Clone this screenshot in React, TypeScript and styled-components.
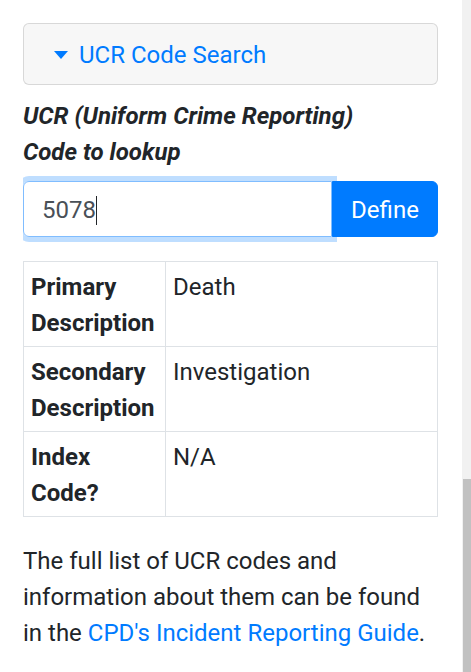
import styled, { createGlobalStyle } from 'styled-components';

const GlobalStyle = createGlobalStyle`
  html, body {
    margin: 0;
    padding: 0;
    overflow: hidden;
    background: #fff;
  }
  body {
    font-family: Roboto, "Liberation Sans", sans-serif;
    font-size: 24px;
    line-height: 36px;
    color: #212529;
  }
`;

const Page = styled.div`
  display: flex;
  height: 100vh;
`;

const Main = styled.main`
  flex: 1;
  padding: 24px 24px 0 23px;
  min-width: 0;
`;

const ScrollTrack = styled.div`
  width: 9px;
  background: #f1f1f1;
  display: flex;
  flex-direction: column;
`;

const ScrollThumb = styled.div`
  margin-top: auto;
  margin-left: 1px;
  height: 193px;
  background: #c1c1c1;
`;

const CardHeader = styled.button`
  display: flex;
  align-items: center;
  gap: 11px;
  width: 100%;
  box-sizing: border-box;
  height: 62px;
  margin-top: -1px;
  padding: 2px 30px 0;
  background: #f7f7f7;
  border: 1px solid rgba(0, 0, 0, 0.125);
  border-radius: 6px;
  font: inherit;
  color: #007bff;
  text-align: left;
  cursor: pointer;
`;

const Label = styled.label`
  display: block;
  max-width: 390px;
  margin: 13px 0 11px;
  font-weight: 700;
  font-style: italic;
`;

const InputGroup = styled.div`
  display: flex;
  height: 56px;
`;

const Field = styled.div`
  flex: 1;
  display: flex;
  align-items: center;
  padding: 2px 18px 0;
  border: 1px solid #80bdff;
  border-radius: 6px 0 0 6px;
  color: #495057;
  box-shadow: 0 0 0 5px rgba(0, 123, 255, 0.25);
  clip-path: inset(-5px -5px -5px 0);
  position: relative;
  z-index: 1;
`;

const Caret = styled.span`
  display: inline-block;
  width: 1px;
  height: 29px;
  background: #212529;
  margin-left: 0;
`;

const DefineButton = styled.button`
  width: 106px;
  border: 1px solid #007bff;
  border-radius: 0 6px 6px 0;
  background: #007bff;
  color: #fff;
  font: inherit;
  padding: 2px 0 0;
  position: relative;
  z-index: 2;
  cursor: pointer;
`;

const Table = styled.table`
  width: 100%;
  margin: 24px 0;
  border-collapse: collapse;
  table-layout: fixed;
`;

const Cell = styled.td<{ $head?: boolean }>`
  border: 1px solid #dee2e6;
  padding: 7px 7px 5px;
  vertical-align: top;
  text-align: left;
  font-weight: ${p => (p.$head ? 700 : 400)};
`;

const Note = styled.p`
  margin: 0;
  padding-top: 2px;
`;

const Link = styled.a`
  color: #007bff;
  text-decoration: none;
`;

const rows = [
  { label: 'Primary Description', value: 'Death' },
  { label: 'Secondary Description', value: 'Investigation' },
  { label: 'Index Code?', value: 'N/A' },
];

function CaretDown() {
  return (
    <svg width="14" height="8" viewBox="0 0 14 8" aria-hidden="true">
      <path d="M0 0h14L7 8z" fill="#007bff" />
    </svg>
  );
}

export default function App() {
  return (
    <>
      <GlobalStyle />
      <Page>
        <Main>
          <CardHeader type="button">
            <CaretDown />
            UCR Code Search
          </CardHeader>
          <Label>UCR (Uniform Crime Reporting) Code to lookup</Label>
          <InputGroup>
            <Field role="textbox">
              5078
              <Caret />
            </Field>
            <DefineButton type="button">Define</DefineButton>
          </InputGroup>
          <Table>
            <colgroup>
              <col style={{ width: 142 }} />
              <col />
            </colgroup>
            <tbody>
              {rows.map(r => (
                <tr key={r.label}>
                  <Cell as="th" $head>{r.label}</Cell>
                  <Cell>{r.value}</Cell>
                </tr>
              ))}
            </tbody>
          </Table>
          <Note>
            The full list of UCR codes and information about them can be found in the{' '}
            <Link href="#">CPD's Incident Reporting Guide</Link>.
          </Note>
        </Main>
        <ScrollTrack>
          <ScrollThumb />
        </ScrollTrack>
      </Page>
    </>
  );
}
